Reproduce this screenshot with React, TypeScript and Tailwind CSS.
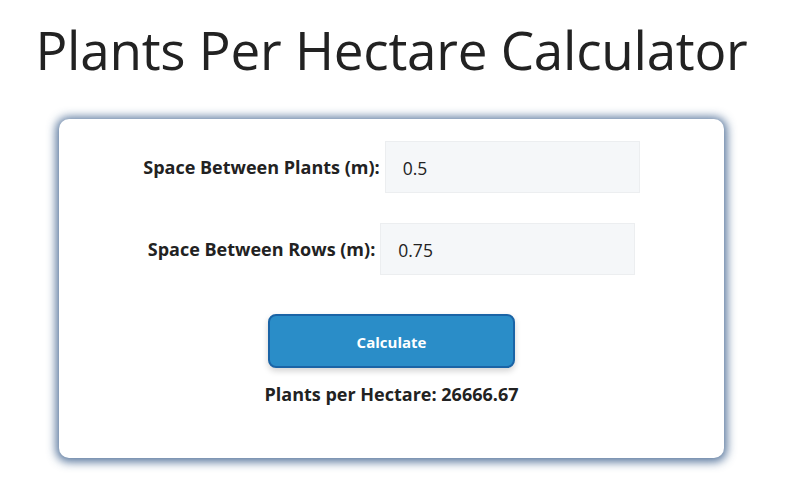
import React, { useState } from 'react';

const App: React.FC = () => {
    const [plantSpacing, setPlantSpacing] = useState('0.5');
    const [rowSpacing, setRowSpacing] = useState('0.75');
    const [result, setResult] = useState<string>('26666.67');

    const handleCalculate = () => {
        const p = parseFloat(plantSpacing);
        const r = parseFloat(rowSpacing);
        if (p > 0 && r > 0) {
            setResult((10000 / (p * r)).toFixed(2));
        }
    };

    return (
        <div className="min-h-[489px] bg-white flex flex-col items-center pr-[7px] font-['Open_Sans',sans-serif] text-[#222]">
            <h1 className="mt-[19px] text-[53px] leading-[62px] font-normal tracking-[-0.25px]">Plants Per Hectare Calculator</h1>
            <div className="mt-[38px] w-[665px] rounded-[10px] bg-white shadow-[0_1px_10px_3px_rgba(60,95,140,0.85)] pt-[22px] pb-[51px] flex flex-col items-center">
                <div className="flex items-center gap-[5px]">
                    <label className="text-[18px] font-bold">Space Between Plants (m):</label>
                    <input
                        value={plantSpacing}
                        onChange={e => setPlantSpacing(e.target.value)}
                        className="w-[255px] h-[52px] bg-[#f5f7f9] border border-[#eceef0] px-[17px] pt-[2px] text-[17.5px] outline-none"
                    />
                </div>
                <div className="mt-[30px] flex items-center gap-[5px]">
                    <label className="text-[18px] font-bold">Space Between Rows (m):</label>
                    <input
                        value={rowSpacing}
                        onChange={e => setRowSpacing(e.target.value)}
                        className="w-[255px] h-[52px] bg-[#f5f7f9] border border-[#eceef0] px-[17px] pt-[2px] text-[17.5px] outline-none"
                    />
                </div>
                <button
                    onClick={handleCalculate}
                    className="mt-[39px] w-[247px] h-[54px] rounded-[8px] bg-[#2a8dc8] border-2 border-[#1a64a6] text-white text-[15px] font-bold pt-[2px] shadow-[0_3px_6px_rgba(0,0,0,0.18)]"
                >
                    Calculate
                </button>
                <p className="mt-[13px] text-[18px] leading-[26px] font-bold">Plants per Hectare: {result}</p>
            </div>
        </div>
    );
};

export default App;
